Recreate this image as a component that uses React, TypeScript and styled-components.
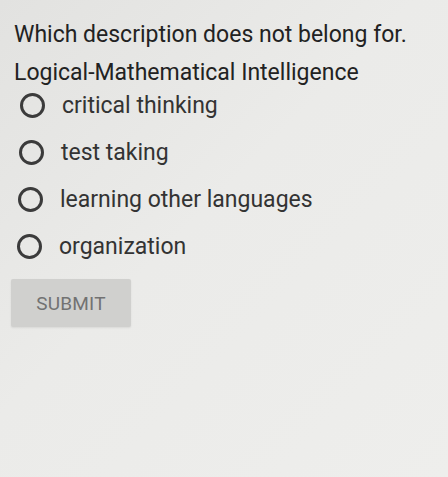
import React from "react";
import styled, { createGlobalStyle } from "styled-components";

const Global = createGlobalStyle`
  html, body { margin: 0; padding: 0; background: #e8e8e6; }
  body { font-family: Roboto, "Noto Sans", Arial, sans-serif; }
`;

const Page = styled.div`
  width: 448px;
  height: 477px;
  box-sizing: border-box;
  padding: 16px 0 0 14px;
  background: linear-gradient(135deg, #e2e2e0 0%, #ebebe9 45%, #eeeeec 100%);
  overflow: hidden;
`;

const Question = styled.div`
  font-size: 23px;
  line-height: 38px;
  color: #222222;
`;

const Options = styled.div`
  display: flex;
  flex-direction: column;
  margin-top: -10px;
`;

const Option = styled.label<{ $indent: number }>`
  display: flex;
  align-items: center;
  height: 47px;
  padding-left: ${(p) => p.$indent}px;
  gap: 17px;
  font-size: 23px;
  color: #333333;
  cursor: pointer;
`;

const Radio = styled.span`
  width: 19px;
  height: 19px;
  border: 3px solid #3b3b3b;
  border-radius: 50%;
  flex: none;
`;

const Submit = styled.button`
  margin-top: 9px;
  margin-left: -3px;
  width: 120px;
  height: 48px;
  border: none;
  background: #d0d0ce;
  color: #727272;
  font-family: Roboto, Arial, sans-serif;
  font-size: 19px;
  letter-spacing: 0.2px;
  border-radius: 2px;
  box-shadow: 0 1px 2px rgba(0,0,0,0.08);
`;

const options = ["critical thinking", "test taking", "learning other languages", "organization"];

export default function App() {
  return (
    <>
      <Global />
      <Page>
        <Question>
          Which description does not belong for.
          <br />
          Logical-Mathematical Intelligence
        </Question>
        <Options>
          {options.map((o, i) => (
            <Option key={o} $indent={6 - i}>
              <Radio />
              {o}
            </Option>
          ))}
        </Options>
        <Submit>SUBMIT</Submit>
      </Page>
    </>
  );
}
